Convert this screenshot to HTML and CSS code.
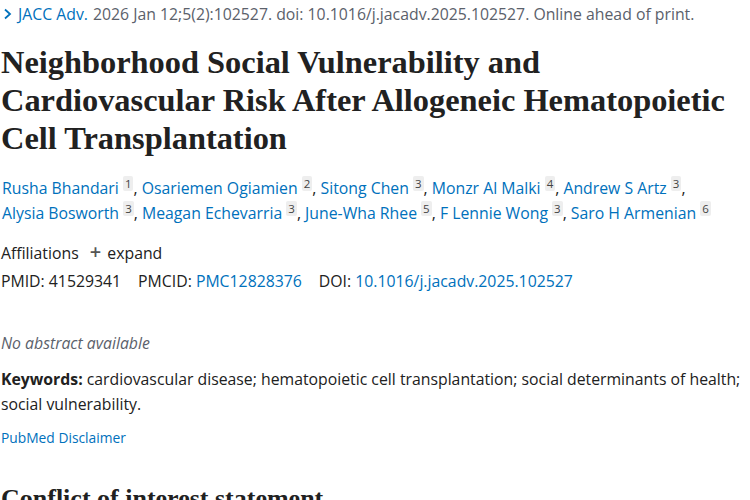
FILE: index.html
```html
<!DOCTYPE html>
<html lang="en">
<head>
<meta charset="utf-8">
<title>Neighborhood Social Vulnerability</title>
<link rel="stylesheet" href="styles.css">
</head>
<body>
<main class="article">
  <div class="citation">
    <svg class="chev" width="10" height="12" viewBox="0 0 10 12"><path d="M2 1.5 L7 6 L2 10.5" fill="none" stroke="#0071bc" stroke-width="1.8"/></svg>
    <a class="journal" href="#">JACC Adv.</a>
    <span class="cit">2026 Jan 12;5(2):102527. doi: 10.1016/j.jacadv.2025.102527. Online ahead of print.</span>
  </div>
  <h1 class="title">Neighborhood Social Vulnerability and Cardiovascular Risk After Allogeneic Hematopoietic Cell Transplantation</h1>
  <div class="authors">
    <a href="#">Rusha Bhandari</a> <sup class="aff">1</sup>, <a href="#">Osariemen Ogiamien</a> <sup class="aff">2</sup>, <a href="#">Sitong Chen</a> <sup class="aff">3</sup>, <a href="#">Monzr Al Malki</a> <sup class="aff">4</sup>, <a href="#">Andrew S Artz</a> <sup class="aff">3</sup>, <a href="#">Alysia Bosworth</a> <sup class="aff">3</sup>, <a href="#">Meagan Echevarria</a> <sup class="aff">3</sup>, <a href="#">June-Wha Rhee</a> <sup class="aff">5</sup>, <a href="#">F Lennie Wong</a> <sup class="aff">3</sup>, <a href="#">Saro H Armenian</a> <sup class="aff">6</sup>
  </div>
  <div class="affiliations">Affiliations <span class="plus">+</span> expand</div>
  <div class="ids">
    <span class="id">PMID: 41529341</span>
    <span class="id">PMCID: <a href="#">PMC12828376</a></span>
    <span class="id">DOI: <a href="#">10.1016/j.jacadv.2025.102527</a></span>
  </div>
  <p class="noabs">No abstract available</p>
  <p class="keywords"><strong>Keywords:</strong> cardiovascular disease; hematopoietic cell transplantation; social determinants of health; social vulnerability.</p>
  <a class="disclaimer" href="#">PubMed Disclaimer</a>
  <h2 class="section">Conflict of interest statement</h2>
</main>
</body>
</html>
```
FILE: styles.css
```css
html, body {
  margin: 0;
  padding: 0;
  background: #fff;
}
body {
  font-family: "Open Sans", "Noto Sans", sans-serif;
  color: #212121;
  font-size: 15.8px;
}
a {
  color: #0071bc;
  text-decoration: none;
}
.article {
  padding: 0 2px 0 1px;
}
.citation {
  display: flex;
  align-items: center;
  gap: 5px;
  height: 27px;
  padding-left: 2px;
  color: #5b616b;
  white-space: nowrap;
}
.chev { flex: none; }
.title {
  font-family: "Liberation Serif", serif;
  font-weight: 700;
  font-size: 32.4px;
  line-height: 38px;
  margin: 16px 0 0 0;
  color: #212121;
}
.authors {
  margin-top: 19px;
  line-height: 25px;
  padding-left: 1px;
  padding-right: 22px;
}
.aff {
  display: inline-block;
  font-size: 11.5px;
  line-height: 15px;
  padding: 0 2px;
  background: #eeeeee;
  color: #444;
  vertical-align: 6px;
  border-radius: 2px;
}
.affiliations {
  margin-top: 13px;
  line-height: 25px;
}
.plus {
  font-size: 20px;
  font-weight: 600;
  margin: 0 2px 0 7px;
  color: #555;
}
.ids {
  display: flex;
  gap: 17px;
  line-height: 25px;
  margin-top: 3px;
}
.noabs {
  margin: 37px 0 0 0;
  font-style: italic;
  color: #5b616b;
  line-height: 25px;
}
.keywords {
  margin: 11px 0 0 0;
  line-height: 25px;
}
.disclaimer {
  display: block;
  margin-top: 10px;
  font-size: 13.8px;
  line-height: 22px;
}
.section {
  font-family: "Liberation Serif", serif;
  font-weight: 700;
  font-size: 26px;
  margin: 35px 0 0 0;
}
```
